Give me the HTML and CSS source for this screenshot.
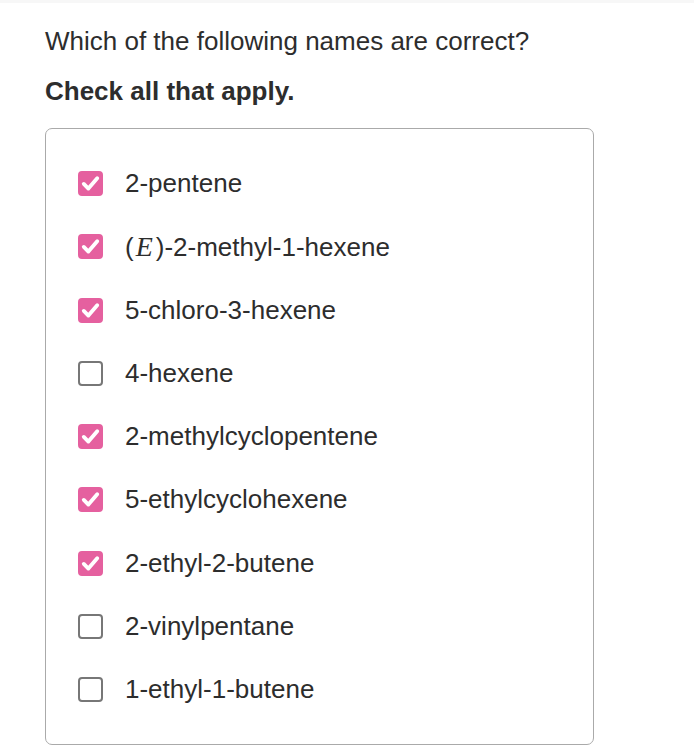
FILE: index.html
```html
<!DOCTYPE html>
<html lang="en">
<head>
  <meta charset="UTF-8" />
  <title>Check all that apply</title>
  <link rel="stylesheet" href="styles.css">
</head>
<body>
  <div class="faixa"></div>
  <div class="pergunta">
    <p class="titulo">Which of the following names are correct?</p>
    <p class="instrucao">Check all that apply.</p>

    <div class="caixa">
      <label class="opcao"><input type="checkbox" checked><span>2-pentene</span></label>
      <label class="opcao"><input type="checkbox" checked><span>(<i class="mat">E</i>)-2-methyl-1-hexene</span></label>
      <label class="opcao"><input type="checkbox" checked><span>5-chloro-3-hexene</span></label>
      <label class="opcao"><input type="checkbox"><span>4-hexene</span></label>
      <label class="opcao"><input type="checkbox" checked><span>2-methylcyclopentene</span></label>
      <label class="opcao"><input type="checkbox" checked><span>5-ethylcyclohexene</span></label>
      <label class="opcao"><input type="checkbox" checked><span>2-ethyl-2-butene</span></label>
      <label class="opcao"><input type="checkbox"><span>2-vinylpentane</span></label>
      <label class="opcao"><input type="checkbox"><span>1-ethyl-1-butene</span></label>
    </div>
  </div>
</body>
</html>
```

FILE: styles.css
```css
body {
  margin: 0;
  font-family: "Liberation Sans", Arial, sans-serif;
  color: #2d2d2d;
  background: #fff;
}
.faixa {
  height: 3px;
  background: #f7f7f7;
}
.pergunta {
  padding-left: 45px;
}
.titulo {
  margin: 0;
  padding-top: 23px;
  font-size: 26px;
  line-height: 30px;
}
.instrucao {
  margin: 20px 0 0;
  font-size: 26px;
  line-height: 30px;
  font-weight: bold;
}
.caixa {
  box-sizing: border-box;
  width: 549px;
  margin-top: 22px;
  padding: 23px 0 23px 32px;
  border: 1.5px solid #aaa;
  border-radius: 7px;
}
.opcao {
  display: flex;
  align-items: center;
  height: 63.25px;
  font-size: 26px;
  cursor: pointer;
}
.opcao input {
  appearance: none;
  -webkit-appearance: none;
  box-sizing: border-box;
  width: 25px;
  height: 25px;
  margin: 0 22px 0 0;
  border: 2px solid #777;
  border-radius: 4px;
  background: #fff;
  flex-shrink: 0;
}
.opcao input:checked {
  border-color: #e5609f;
  background: #e5609f url("data:image/svg+xml,%3Csvg xmlns='http://www.w3.org/2000/svg' viewBox='0 0 24 24'%3E%3Cpath d='M5 12.5l4.8 4.8L19 6.5' fill='none' stroke='white' stroke-width='4' stroke-linecap='round' stroke-linejoin='round'/%3E%3C/svg%3E") center / 23px no-repeat;
}
.mat {
  font-family: "Liberation Serif", "Times New Roman", serif;
  font-size: 28px;
  padding: 0 3px 0 2px;
}
```
